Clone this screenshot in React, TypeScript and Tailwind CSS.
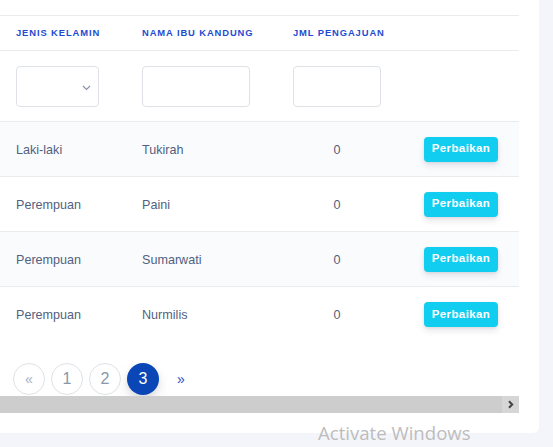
import React from "react";

const rows = [
  { jk: "Laki-laki", ibu: "Tukirah", jml: "0", alt: true },
  { jk: "Perempuan", ibu: "Paini", jml: "0", alt: false },
  { jk: "Perempuan", ibu: "Sumarwati", jml: "0", alt: true },
  { jk: "Perempuan", ibu: "Nurmilis", jml: "0", alt: false },
];

export default function App() {
  return (
    <div
      className="relative w-[553px] h-[447px] overflow-hidden bg-[#f4f5fa]"
      style={{ fontFamily: '"Liberation Sans", Arial, sans-serif' }}
    >
      <div className="w-[539px] h-[433px] bg-white rounded-br-[6px] pt-[15px]">
        <div className="w-[519px]">
          {/* header */}
          <div className="grid grid-cols-[126px_151px_120px_122px] h-[36px] items-center border-t border-b border-[#e9ecef] text-[9.4px] font-bold tracking-[0.9px] uppercase text-[#1e4bd2]">
            <div className="pl-[16px]">Jenis Kelamin</div>
            <div className="pl-[16px]">Nama Ibu Kandung</div>
            <div className="pl-[16px]">Jml Pengajuan</div>
            <div></div>
          </div>
          {/* filter */}
          <div className="grid grid-cols-[126px_151px_120px_122px] h-[71px] items-center border-b border-[#e9ecef]">
            <div className="pl-[16px]">
              <div className="relative w-[83px] h-[41px] border border-[#dee2e6] rounded-[4px] bg-white">
                <svg
                  className="absolute right-[7px] top-[18px]"
                  width="9"
                  height="6"
                  viewBox="0 0 9 6"
                  fill="none"
                >
                  <path d="M1 1l3.5 3.5L8 1" stroke="#8a94a6" strokeWidth="1.2" />
                </svg>
              </div>
            </div>
            <div className="pl-[16px]">
              <div className="w-[108px] h-[41px] border border-[#dee2e6] rounded-[4px] bg-white" />
            </div>
            <div className="pl-[16px]">
              <div className="w-[88px] h-[41px] border border-[#dee2e6] rounded-[4px] bg-white" />
            </div>
            <div></div>
          </div>
          {/* body */}
          {rows.map((r, i) => (
            <div
              key={i}
              className={`grid grid-cols-[126px_151px_120px_122px] h-[55px] items-center text-[12.6px] text-[#525f7f] ${
                r.alt ? "bg-[#fafbfd]" : "bg-white"
              } ${i < rows.length - 1 ? "border-b border-[#e9ecef]" : ""}`}
            >
              <div className="pl-[16px] pt-[2px]">{r.jk}</div>
              <div className="pl-[16px] pt-[2px]">{r.ibu}</div>
              <div className="pl-[16px] pt-[2px]">
                <div className="w-[88px] text-center">{r.jml}</div>
              </div>
              <div className="pl-[27px]">
                <button className="w-[74px] h-[25px] rounded-[4px] bg-[#11cdef] text-white text-[11.5px] font-bold tracking-[0.4px] shadow-[0_4px_6px_rgba(50,50,93,0.11),0_1px_3px_rgba(0,0,0,0.08)]">
                  Perbaikan
                </button>
              </div>
            </div>
          ))}
          {/* pagination */}
          <div className="flex items-center gap-[6px] pl-[13px] mt-[21px] h-[32px]">
            <div className="w-[32px] h-[32px] rounded-full border border-[#dee2e6] flex items-center justify-center text-[14px] text-[#a3afc0]">
              «
            </div>
            <div className="w-[32px] h-[32px] rounded-full border border-[#dee2e6] flex items-center justify-center text-[16px] text-[#8898aa]">
              1
            </div>
            <div className="w-[32px] h-[32px] rounded-full border border-[#dee2e6] flex items-center justify-center text-[16px] text-[#8898aa]">
              2
            </div>
            <div className="w-[32px] h-[32px] rounded-full bg-[#0b46b6] flex items-center justify-center text-[16px] text-white shadow-[0_7px_14px_rgba(50,50,93,0.1),0_3px_6px_rgba(0,0,0,0.08)]">
              3
            </div>
            <div className="w-[32px] h-[32px] flex items-center justify-center text-[14px] text-[#2f4cc0]">
              »
            </div>
          </div>
          {/* scrollbar */}
          <div className="flex h-[17px] mt-[1px]">
            <div className="flex-1 bg-[#cdcdcd]" />
            <div className="w-[17px] bg-[#d6d6d6] flex items-center justify-center">
              <svg width="8" height="9" viewBox="0 0 8 9">
                <path d="M2 1.2l3.2 3.3L2 7.8" stroke="#444" strokeWidth="2" fill="none" />
              </svg>
            </div>
          </div>
        </div>
      </div>
      <div
        className="absolute left-[318px] top-[424px] leading-none text-[18.6px] text-[#bdbdbd] pointer-events-none"
        style={{ fontFamily: '"Open Sans", "Noto Sans", sans-serif' }}
      >
        Activate Windows
      </div>
    </div>
  );
}
